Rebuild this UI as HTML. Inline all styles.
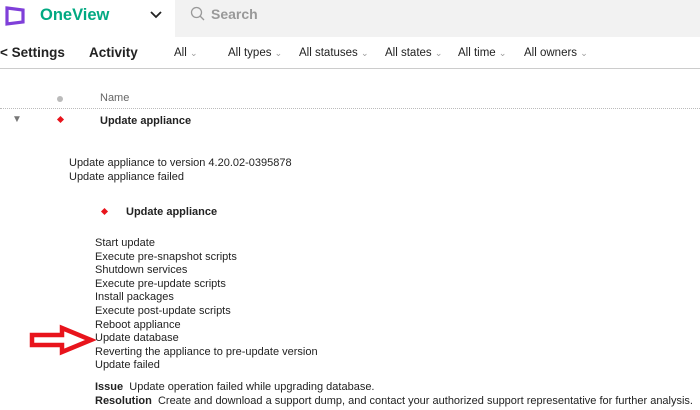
<!DOCTYPE html>
<html><head><style>
body{margin:0;width:700px;height:410px;background:#fff;font-family:"Liberation Sans",sans-serif;color:#222;position:relative;overflow:hidden}
.a{position:absolute;white-space:nowrap}
.t{font-size:11px;line-height:13.6px}
.c{color:#999;font-size:9px}
</style></head><body>
<div class="a" style="left:175px;top:0;width:525px;height:37px;background:#f2f2f2"></div>
<svg class="a" style="left:4px;top:5px" width="22" height="22"><path d="M3 3 L19 5 L19 17 L3 19 Z" fill="none" stroke="#7f3fd9" stroke-width="3.2"/></svg>
<div class="a" style="left:40px;top:6px;font-size:16.5px;font-weight:bold;color:#01a982">OneView</div>
<svg class="a" style="left:149px;top:9px" width="14" height="12"><path d="M2 3 L7 8 L12 3" fill="none" stroke="#222" stroke-width="1.8"/></svg>
<svg class="a" style="left:190px;top:6px" width="16" height="16"><circle cx="6.5" cy="6.5" r="5" fill="none" stroke="#999" stroke-width="1.3"/><path d="M10 10 L14 14" stroke="#999" stroke-width="1.3"/></svg>
<div class="a" style="left:211px;top:6px;font-size:14px;color:#999;font-weight:bold">Search</div>
<div class="a" style="left:0;top:45px;font-size:13.5px;font-weight:bold">&lt; Settings</div>
<div class="a" style="left:89px;top:45px;font-size:13.5px;font-weight:bold">Activity</div>
<div class="a" style="left:174px;top:47px;font-size:11.5px">All <span class="c">&#8964;</span></div>
<div class="a" style="left:228px;top:47px;font-size:11.5px">All types <span class="c">&#8964;</span></div>
<div class="a" style="left:299px;top:47px;font-size:11.5px">All statuses <span class="c">&#8964;</span></div>
<div class="a" style="left:385px;top:47px;font-size:11.5px">All states <span class="c">&#8964;</span></div>
<div class="a" style="left:458px;top:47px;font-size:11.5px">All time <span class="c">&#8964;</span></div>
<div class="a" style="left:524px;top:47px;font-size:11.5px">All owners <span class="c">&#8964;</span></div>
<div class="a" style="left:0;top:68px;width:700px;height:1px;background:#ccc"></div>
<div class="a" style="left:57px;top:96px;width:6px;height:6px;border-radius:50%;background:#bbb"></div>
<div class="a" style="left:100px;top:92px;font-size:11px;color:#666">Name</div>
<div class="a" style="left:0;top:108px;width:700px;border-top:1px dotted #bbb"></div>
<div class="a" style="left:12px;top:114px;font-size:10px;color:#777">&#9660;</div>
<div class="a" style="left:58px;top:117px;width:5px;height:5px;background:#e8141c;transform:rotate(45deg)"></div>
<div class="a" style="left:100px;top:115px;font-size:11px;font-weight:bold">Update appliance</div>
<div class="a t" style="left:69px;top:157px">Update appliance to version 4.20.02-0395878<br>Update appliance failed</div>
<div class="a" style="left:102px;top:209px;width:5px;height:5px;background:#e8141c;transform:rotate(45deg)"></div>
<div class="a" style="left:126px;top:206px;font-size:11px;font-weight:bold">Update appliance</div>
<div class="a t" style="left:95px;top:237px">Start update<br>Execute pre-snapshot scripts<br>Shutdown services<br>Execute pre-update scripts<br>Install packages<br>Execute post-update scripts<br>Reboot appliance<br>Update database<br>Reverting the appliance to pre-update version<br>Update failed</div>
<svg class="a" style="left:28px;top:324px" width="68" height="34"><path d="M4 11 L34 11 L34 4 L63 16 L34 28 L34 21 L4 21 Z" fill="#fff" stroke="#e8141c" stroke-width="4.5" stroke-linejoin="miter"/></svg>
<div class="a t" style="left:95px;top:381px"><b>Issue</b>&nbsp; Update operation failed while upgrading database.<br><b>Resolution</b>&nbsp; Create and download a support dump, and contact your authorized support representative for further analysis.</div>
</body></html>
